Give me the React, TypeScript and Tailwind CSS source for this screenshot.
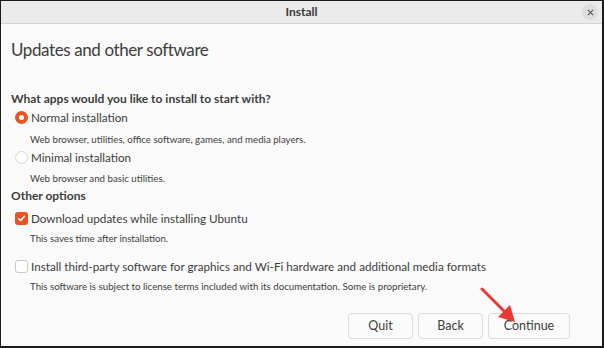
import React from 'react';

const font = { fontFamily: 'Lato, "Noto Sans", sans-serif' };

const Radio: React.FC<{ checked?: boolean }> = ({ checked }) =>
  checked ? (
    <span className="w-[13px] h-[13px] rounded-full bg-[#e95420] flex items-center justify-center shrink-0">
      <span className="w-[5px] h-[5px] rounded-full bg-white" />
    </span>
  ) : (
    <span className="w-[13px] h-[13px] rounded-full border border-[#d6d6d6] bg-white shrink-0" />
  );

const Check: React.FC<{ checked?: boolean }> = ({ checked }) =>
  checked ? (
    <span className="w-[13px] h-[13px] rounded-[3px] bg-[#e95420] flex items-center justify-center shrink-0">
      <svg width="9" height="9" viewBox="0 0 10 10" fill="none">
        <path d="M1.8 5.2 L4 7.3 L8.3 2.6" stroke="white" strokeWidth="1.6" strokeLinecap="round" strokeLinejoin="round" />
      </svg>
    </span>
  ) : (
    <span className="w-[13px] h-[13px] rounded-[3px] border border-[#c8c8c8] bg-white shrink-0" />
  );

const Button: React.FC<{ label: string; width: string }> = ({ label, width }) => (
  <button className={`${width} h-[26px] rounded-[4px] border border-[#dcdcdc] bg-[#fafafa] text-[12.5px] text-[#3d3d3d] flex items-center justify-center`}>
    {label}
  </button>
);

const App: React.FC = () => {
  return (
    <div className="w-[604px] h-[348px] bg-[#fafafa] border-t border-l border-r-2 border-b-2 border-[#1b1b1b] flex flex-col text-[#3d3d3d]" style={font}>
      <div className="h-[23px] bg-[#ebebeb] border-b border-[#d2d2d2] relative flex items-center justify-center shrink-0">
        <span className="text-[12px] font-bold text-[#3a3a3a]">Install</span>
        <span className="absolute right-[4px] top-[3px] w-[16px] h-[16px] rounded-full bg-[#dedede] flex items-center justify-center">
          <svg width="7" height="7" viewBox="0 0 8 8">
            <path d="M1 1 L7 7 M7 1 L1 7" stroke="#555" strokeWidth="1.3" />
          </svg>
        </span>
      </div>

      <div className="flex-1 flex flex-col pl-[10px] pr-[32px] relative">
        <h1 className="mt-[12px] h-[28px] leading-[28px] text-[17px] tracking-[-0.4px] text-[#3d3d3d]">Updates and other software</h1>

        <div className="mt-[27px] h-[16px] leading-[16px] text-[12px] font-bold">What apps would you like to install to start with?</div>

        <div className="mt-[1px] h-[18px] flex items-center gap-[3px] pl-[4px]">
          <Radio checked />
          <span className="text-[11.7px] leading-[18px]">Normal installation</span>
        </div>
        <div className="mt-[6px] pl-[19px] h-[14px] leading-[14px] text-[9.7px]">Web browser, utilities, office software, games, and media players.</div>

        <div className="mt-[2px] h-[18px] flex items-center gap-[3px] pl-[4px]">
          <Radio />
          <span className="text-[11.7px] leading-[18px]">Minimal installation</span>
        </div>
        <div className="mt-[5px] pl-[19px] h-[14px] leading-[14px] text-[9.7px]">Web browser and basic utilities.</div>

        <div className="mt-[3px] h-[16px] leading-[16px] text-[12px] font-bold">Other options</div>

        <div className="mt-[5px] h-[18px] flex items-center gap-[3px] pl-[4px]">
          <Check checked />
          <span className="text-[11.7px] leading-[18px]">Download updates while installing Ubuntu</span>
        </div>
        <div className="mt-[4px] pl-[19px] h-[14px] leading-[14px] text-[9.7px]">This saves time after installation.</div>

        <div className="mt-[12px] h-[18px] flex items-center gap-[3px] pl-[4px]">
          <Check />
          <span className="text-[11.7px] leading-[18px]">Install third-party software for graphics and Wi-Fi hardware and additional media formats</span>
        </div>
        <div className="mt-[4px] pl-[19px] h-[14px] leading-[14px] text-[9.7px]">This software is subject to license terms included with its documentation. Some is proprietary.</div>

        <div className="mt-auto mb-[7px] flex justify-end gap-[5px]">
          <Button label="Quit" width="w-[65px]" />
          <Button label="Back" width="w-[65px]" />
          <Button label="Continue" width="w-[82px]" />
        </div>

        <svg className="absolute left-[476px] top-[260px]" width="44" height="44" viewBox="0 0 44 44">
          <path d="M5 5 L31 31" stroke="#ea3b33" strokeWidth="3" strokeLinecap="round" />
          <path d="M38 38 L21 33 L33 21 Z" fill="#ea3b33" />
        </svg>
      </div>
    </div>
  );
};

export default App;
